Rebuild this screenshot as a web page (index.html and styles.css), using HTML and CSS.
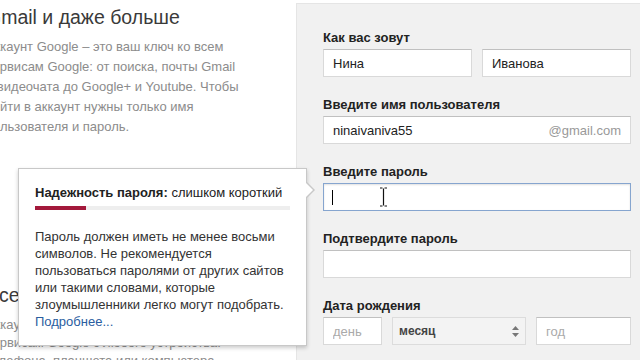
FILE: index.html
```html
<!DOCTYPE html>
<html lang="ru">
<head>
    <meta charset="UTF-8">
    <title>Создайте аккаунт Google</title>
    <link rel="stylesheet" href="styles.css">
</head>
<body>
    <div class="page">
        <div class="intro">
            <h2>Gmail и даже больше</h2>
            <p>Аккаунт Google – это ваш ключ ко всем сервисам Google: от поиска, почты Gmail и видеочата до Google+ и Youtube. Чтобы войти в аккаунт нужны только имя пользователя и пароль.</p>
            <h2 class="second">Все сервисы на любом устройстве</h2>
            <p class="more">Аккаунт Google открывает доступ ко всем сервисам Google с любого устройства: телефона, планшета или компьютера.</p>
        </div>

        <form class="signup">
            <div class="group">
                <label>Как вас зовут</label>
                <div class="row">
                    <input class="field" type="text" value="Нина">
                    <input class="field" type="text" value="Иванова">
                </div>
            </div>
            <div class="group">
                <label>Введите имя пользователя</label>
                <div class="field with-suffix">
                    <span class="val">ninaivaniva55</span>
                    <span class="suffix">@gmail.com</span>
                </div>
            </div>
            <div class="group">
                <label>Введите пароль</label>
                <div class="field focused">
                    <span class="caret"></span>
                    <svg class="ibeam" width="9" height="20" viewBox="0 0 9 20">
                        <path d="M1 1h2.5M5.5 1H8M4.5 1.5v17M1 19h2.5M5.5 19H8" stroke="#111" stroke-width="1.2" fill="none"/>
                    </svg>
                </div>
            </div>
            <div class="group">
                <label>Подтвердите пароль</label>
                <div class="field"></div>
            </div>
            <div class="group">
                <label>Дата рождения</label>
                <div class="row birth">
                    <input class="field day" type="text" placeholder="день">
                    <div class="select">
                        <span>месяц</span>
                        <svg width="7" height="11" viewBox="0 0 7 11">
                            <path d="M3.5 0L7 4H0z M3.5 11L0 7h7z" fill="#777"/>
                        </svg>
                    </div>
                    <input class="field year" type="text" placeholder="год">
                </div>
            </div>
        </form>

        <div class="tip">
            <div class="tip-title"><b>Надежность пароля:</b> слишком короткий</div>
            <div class="meter"><div class="meter-fill" style="width: 51px"></div></div>
            <p>Пароль должен иметь не менее восьми символов. Не рекомендуется пользоваться паролями от других сайтов или такими словами, которые злоумышленники легко могут подобрать. <a href="#">Подробнее...</a></p>
        </div>
    </div>
</body>
</html>
```

FILE: styles.css
```css
/* General styling */
body {
    margin: 0;
    font-family: 'Liberation Sans', Arial, sans-serif;
    font-size: 13px;
    color: #222;
    background: #fff;
    overflow: hidden;
}
.page {
    position: relative;
    display: flex;
    width: 640px;
    height: 360px;
    overflow: hidden;
}

/* Left column */
.intro {
    flex: none;
    width: 258px;
    margin-left: -14px;
    padding-right: 52px;
}
.intro h2 {
    margin: 5px 0 0;
    font-size: 19.5px;
    font-weight: normal;
    line-height: 24px;
    color: #3a3a3a;
}
.intro h2.second {
    margin-top: 146px;
    white-space: nowrap;
}
.intro p {
    margin: 8px 0 0;
    line-height: 20px;
    color: #8c8c8c;
}
.intro p.more {
    margin-top: 9px;
    line-height: 18px;
}

/* Sign-up form */
.signup {
    flex: 1;
    margin-top: 3px;
    padding: 26px 9px 0 26px;
    background: #f1f1f1;
    border-top: 1px solid #e5e5e5;
    border-left: 1px solid #e5e5e5;
}
.group {
    margin-bottom: 20px;
}
.group label {
    display: block;
    margin-bottom: 3px;
    font-weight: bold;
    line-height: 16px;
    color: #222;
}
.row {
    display: flex;
    gap: 10px;
}
.field {
    box-sizing: border-box;
    display: flex;
    align-items: center;
    width: 100%;
    height: 28px;
    margin: 0;
    padding: 0 9px;
    font: 13px 'Liberation Sans', Arial, sans-serif;
    color: #222;
    background: #fff;
    border: 1px solid #d9d9d9;
    border-top-color: #c0c0c0;
    outline: none;
}
.row .field {
    flex: 1;
    min-width: 0;
}
.field::placeholder {
    color: #aaa;
}
.with-suffix {
    justify-content: space-between;
}
.suffix {
    color: #999;
}
.focused {
    position: relative;
    border: 1px solid #86a5cf;
    box-shadow: inset 0 1px 2px rgba(0, 0, 0, 0.12);
}
.caret {
    width: 1px;
    height: 15px;
    margin-left: -1px;
    background: #000;
}
.ibeam {
    position: absolute;
    left: 55px;
    top: 3px;
}

/* Birth date */
.birth {
    gap: 0;
}
.birth .day {
    flex: none;
    width: 59px;
    margin-right: 10px;
}
.select {
    box-sizing: border-box;
    display: flex;
    align-items: center;
    justify-content: space-between;
    width: 134px;
    height: 28px;
    padding: 0 6px;
    font-weight: bold;
    font-size: 12px;
    color: #444;
    background: #f3f3f3;
    border: 1px solid #dcdcdc;
    margin-right: 10px;
}
.birth .year {
    flex: 1;
}

/* Password tooltip */
.tip {
    position: absolute;
    left: 18px;
    top: 168px;
    box-sizing: border-box;
    width: 289px;
    height: 178px;
    padding: 16px 16px 0;
    background: #fff;
    border: 1px solid #c8c8c8;
    box-shadow: 0 2px 4px rgba(0, 0, 0, 0.2);
}
.tip::before,
.tip::after {
    content: "";
    position: absolute;
    top: 12px;
    border: 9px solid transparent;
}
.tip::before {
    right: -18px;
    border-left-color: #c8c8c8;
}
.tip::after {
    right: -16px;
    border-left-color: #fff;
}
.tip-title {
    line-height: 16px;
    white-space: nowrap;
}
.meter {
    height: 4px;
    margin-top: 5px;
    background: #eee;
}
.meter-fill {
    height: 4px;
    background: #a3193b;
}
.tip p {
    margin: 18px 0 0;
    line-height: 17px;
    color: #333;
}
.tip a {
    color: #2a5d9f;
    text-decoration: none;
}
```
